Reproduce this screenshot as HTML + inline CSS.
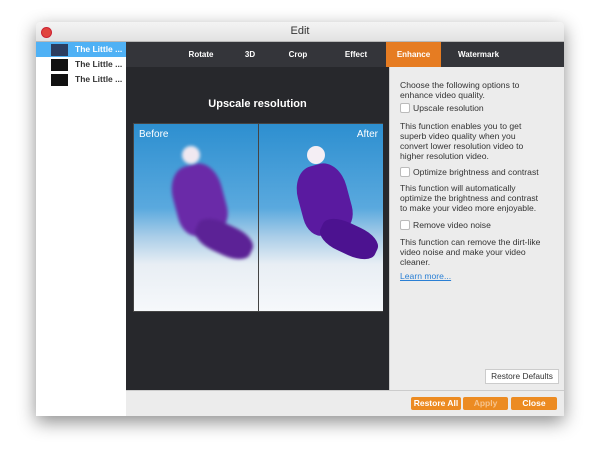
<!DOCTYPE html>
<html><head><style>
body{margin:0;width:600px;height:466px;background:#fff;font-family:"Liberation Sans",sans-serif;position:relative;overflow:hidden}
.win{position:absolute;left:36px;top:22px;width:528px;height:394px;background:#ececec;box-shadow:0 6px 18px rgba(0,0,0,.45);border-radius:4px 4px 0 0;overflow:hidden}
.title{position:absolute;left:0;top:0;width:528px;height:19px;background:linear-gradient(#f4f4f4,#e2e2e2);border-bottom:1px solid #b8b8b8;text-align:center;font-size:11px;line-height:19px;color:#333}
.red{position:absolute;left:5px;top:5px;width:9px;height:9px;border-radius:50%;background:#e0443e;border:1px solid #c23}
.side{position:absolute;left:0;top:20px;width:90px;height:374px;background:#fff}
.item{height:15px;font-size:8.5px;font-weight:bold;color:#333;line-height:15px;position:relative}
.item .th{position:absolute;left:15px;top:2px;width:17px;height:12px;background:#111}
.item span{position:absolute;left:39px}
.sel{background:#4fb1f5;color:#fff}
.tabs{position:absolute;left:90px;top:20px;width:438px;height:25px;background:#34353a}
.tab{position:absolute;top:0;height:25px;line-height:25px;font-size:8px;font-weight:bold;color:#fff;text-align:center}
.dark{position:absolute;left:90px;top:45px;width:263px;height:323px;background:#27282c}
.right{position:absolute;left:353px;top:45px;width:175px;height:323px;background:#ececec;border-left:1px solid #ccc;font-size:8.6px;color:#333;line-height:10px}
.right p{margin:0;position:absolute;left:10px;width:142px}
.cb{display:inline-block;width:8px;height:8px;background:#fff;border:1px solid #bbb;border-radius:2px;vertical-align:-2px;margin-right:3px}
.bottom{position:absolute;left:90px;top:368px;width:438px;height:26px;background:#ececec;border-top:1px solid #ccc}
.btn{position:absolute;top:6px;height:13px;background:#ec8b22;color:#fff;font-size:8.5px;font-weight:bold;text-align:center;line-height:13px;border-radius:2px}
.img{position:absolute;top:57px;width:124px;height:187px;overflow:hidden;background:linear-gradient(#2d8fd0 0%,#5aa9de 45%,#a9cde8 60%,#e8eef4 75%,#f6f8fb 100%)}
.sk{position:absolute}
.bl .sk{filter:blur(1.5px)}
</style></head><body>
<div class="win">
<div class="title"><div class="red"></div>Edit</div>
<div class="side">
<div class="item sel"><div class="th" style="background:#2c3d60"></div><span>The Little ...</span></div>
<div class="item"><div class="th"></div><span>The Little ...</span></div>
<div class="item"><div class="th"></div><span>The Little ...</span></div>
</div>
<div class="tabs">
<div class="tab" style="left:58px;width:34px">Rotate</div>
<div class="tab" style="left:110px;width:28px">3D</div>
<div class="tab" style="left:155px;width:34px">Crop</div>
<div class="tab" style="left:210px;width:40px">Effect</div>
<div class="tab" style="left:260px;width:55px;background:#e67c22">Enhance</div>
<div class="tab" style="left:325px;width:55px">Watermark</div>
</div>
<div class="dark">
<div style="position:absolute;left:0;width:263px;top:31px;text-align:center;color:#fff;font-size:11px;font-weight:bold">Upscale resolution</div>
<div style="position:absolute;left:7px;top:56px;width:250px;height:189px;background:#444"></div>
<div class="img bl" style="left:8px">
<div class="sk" style="left:40px;top:40px;width:50px;height:70px;background:#6a2aa8;border-radius:40% 40% 30% 30%;transform:rotate(-15deg)"></div>
<div class="sk" style="left:48px;top:22px;width:18px;height:18px;background:#f0e8f0;border-radius:50%"></div>
<div class="sk" style="left:60px;top:100px;width:60px;height:30px;background:#5c2296;border-radius:40%;transform:rotate(25deg)"></div>
<span style="position:absolute;left:5px;top:5px;color:#fff;font-size:10px">Before</span></div>
<div class="img" style="left:133px">
<div class="sk" style="left:40px;top:40px;width:50px;height:70px;background:#5a1aa0;border-radius:40% 40% 30% 30%;transform:rotate(-15deg)"></div>
<div class="sk" style="left:48px;top:22px;width:18px;height:18px;background:#f4eef4;border-radius:50%"></div>
<div class="sk" style="left:60px;top:100px;width:60px;height:30px;background:#4c1290;border-radius:40%;transform:rotate(25deg)"></div>
<span style="position:absolute;right:5px;top:5px;color:#fff;font-size:10px">After</span></div>
</div>
<div class="right">
<p style="top:13px">Choose the following options to enhance video quality.</p>
<p style="top:36px"><span class="cb"></span>Upscale resolution</p>
<p style="top:54px">This function enables you to get superb video quality when you convert lower resolution video to higher resolution video.</p>
<p style="top:100px"><span class="cb"></span>Optimize brightness and contrast</p>
<p style="top:116px">This function will automatically optimize the brightness and contrast to make your video more enjoyable.</p>
<p style="top:153px"><span class="cb"></span>Remove video noise</p>
<p style="top:170px">This function can remove the dirt-like video noise and make your video cleaner.</p>
<p style="top:204px;color:#2a7fd4;text-decoration:underline">Learn more...</p>
<div style="position:absolute;left:95px;top:302px;width:72px;height:13px;background:#fff;border:1px solid #ccc;font-size:8.3px;line-height:13px;text-align:center">Restore Defaults</div>
</div>
<div class="bottom">
<div class="btn" style="left:285px;width:50px">Restore All</div>
<div class="btn" style="left:337px;width:45px;color:#f6c48e">Apply</div>
<div class="btn" style="left:385px;width:46px">Close</div>
</div>
</div>
</body></html>
